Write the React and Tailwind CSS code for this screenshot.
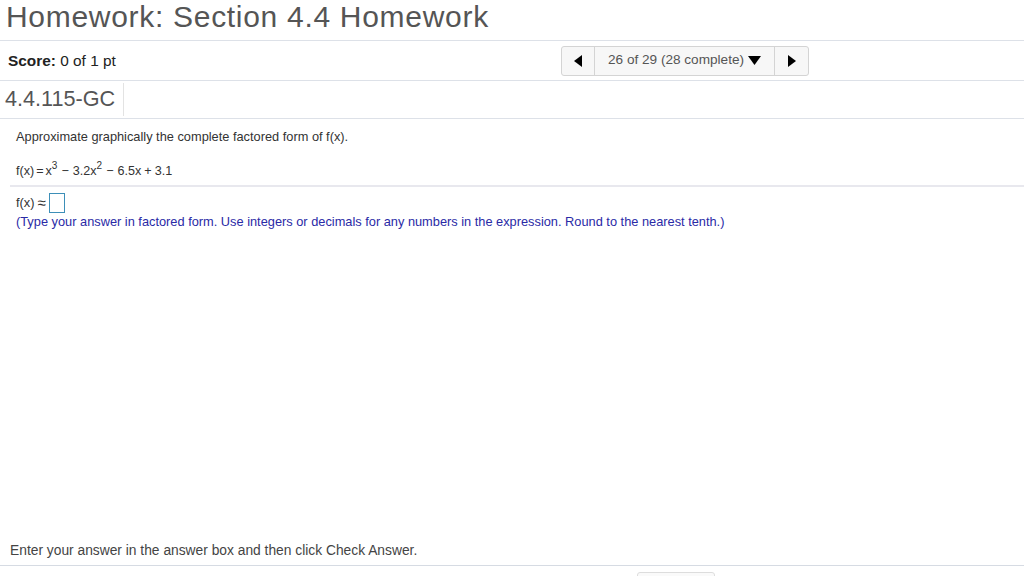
import { useState } from 'react'

function Pager() {
    return (
        <div className="flex h-[30px] border border-[#d4d4d4] rounded-[3px] bg-[#f7f7f7] text-[13.6px] text-[#555]">
            <button className="w-[33px] flex items-center justify-center border-r border-[#d4d4d4]">
                <svg width="9" height="12" viewBox="0 0 9 12"><path d="M8 0 L0 6 L8 12 Z" fill="#000"/></svg>
            </button>
            <button className="w-[180px] flex items-center justify-center gap-[4px] border-r border-[#d4d4d4]">
                <span>26 of 29 (28 complete)</span>
                <svg width="13" height="9" viewBox="0 0 13 9"><path d="M0 0 L13 0 L6.5 9 Z" fill="#000"/></svg>
            </button>
            <button className="w-[33px] flex items-center justify-center">
                <svg width="9" height="12" viewBox="0 0 9 12"><path d="M1 0 L9 6 L1 12 Z" fill="#000"/></svg>
            </button>
        </div>
    )
}

export default function App() {
    const [answer, setAnswer] = useState('')

    return (
        <div className="w-[1024px] h-[576px] overflow-hidden bg-white font-['Liberation_Sans',Arial,sans-serif] flex flex-col">
            {/* Title */}
            <h1 className="h-[41px] px-[6px] text-[30px] tracking-[0.7px] leading-[33px] text-[#555] border-b border-[#dde1e8]">
                Homework: Section 4.4 Homework
            </h1>

            {/* Score + pager */}
            <div className="h-[40px] flex items-center border-b border-[#dde1e8]">
                <div className="w-[561px] pl-[8px] text-[15.4px] text-[#222]">
                    <b>Score:</b> 0 of 1 pt
                </div>
                <Pager/>
            </div>

            {/* Question id */}
            <div className="h-[38px] flex items-stretch border-b border-[#dde1e8]">
                <div className="w-[124px] pl-[5px] flex items-center text-[21.6px] text-[#555] border-r border-[#e3e3e3] my-[2px]">
                    4.4.115-GC
                </div>
            </div>

            {/* Question body */}
            <div className="flex-1 pl-[10px] flex flex-col">
                <p className="pl-[6px] pt-[10px] text-[12.8px] text-[#333] leading-[16px]">
                    Approximate graphically the complete factored form of f(x).
                </p>
                <p className="pl-[6px] pt-[18px] pb-[6px] text-[12.6px] text-[#333] leading-[16px]">
                    f(x)<span className="mx-[2px]">=</span>x<sup className="text-[10px] relative -top-[6px]">3</sup>
                    <span className="mx-[4px]">−</span>3.2x<sup className="text-[10px] relative -top-[6px]">2</sup>
                    <span className="mx-[4px]">−</span>6.5x<span className="mx-[3px]">+</span>3.1
                </p>
                <div className="border-t-2 border-[#e8e8ee]"/>
                <div className="pl-[6px] pt-[6px] flex items-center gap-[3px] text-[12.8px] text-[#333]">
                    <span>f(x)</span>
                    <span className="text-[15px] leading-[16px]">≈</span>
                    <input
                        value={answer}
                        onChange={(e) => setAnswer(e.target.value)}
                        className="w-[16px] h-[20px] border border-[#3d8fb8] outline-none"
                    />
                </div>
                <p className="pl-[6px] pt-[1px] text-[12.8px] leading-[16px] text-[#2a2aa6]">
                    (Type your answer in factored form. Use integers or decimals for any numbers in the expression. Round to the nearest tenth.)
                </p>

                <div className="flex-1"/>
            </div>

            {/* Footer */}
            <div className="h-[24px] pl-[10px] text-[13.8px] text-[#444] leading-[18px] border-b border-[#d6dbe3]">
                Enter your answer in the answer box and then click Check Answer.
            </div>
            <div className="h-[10px] pl-[637px] pt-[6px]">
                <div className="w-[78px] h-[10px] border border-[#ddd] rounded-t-[3px] bg-[#fafafa]"/>
            </div>
        </div>
    )
}
